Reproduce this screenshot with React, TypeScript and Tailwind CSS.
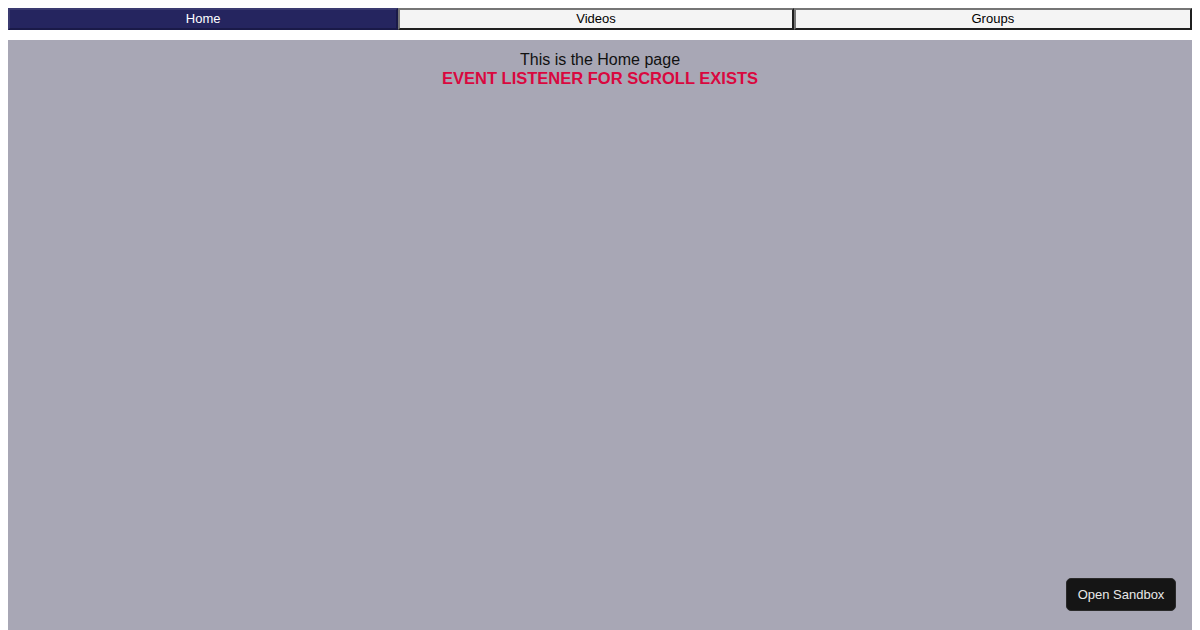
import { useState } from "react";

const tabs = ["Home", "Videos", "Groups"];

export default function App() {
  const [active, setActive] = useState("Home");

  return (
    <div className="min-h-screen bg-white p-2 pb-0 font-['Liberation_Sans',Arial,sans-serif]">
      <nav className="flex">
        {tabs.map((t) => {
          const on = t === active;
          return (
            <button
              key={t}
              onClick={() => setActive(t)}
              className={
                on
                  ? "grow h-[22px] pb-[2px] border-2 border-t-[#3a3a70] border-l-[#3a3a70] border-b-[#1a1a48] border-r-[#1a1a48] bg-[#25255f] text-[13px] leading-none text-white"
                  : "grow h-[22px] pb-[2px] border-2 border-t-[#767676] border-l-[#767676] border-b-[#1f1f1f] border-r-[#1f1f1f] bg-[#f4f4f4] text-[13px] leading-none text-black"
              }
            >
              {t}
            </button>
          );
        })}
      </nav>

      <main className="mt-[10px] h-[590px] bg-[#a8a7b5] pt-[10px] text-center">
        <p className="text-base leading-[19px] text-[#111]">This is the {active} page</p>
        <h2 className="text-[16.5px] font-bold leading-[19px] text-[#d9083f]">
          EVENT LISTENER FOR SCROLL EXISTS
        </h2>
      </main>

      <button className="fixed bottom-[19px] right-[24px] h-[33px] w-[110px] rounded-[5px] border border-[#2a2a2a] bg-[#151515] text-[13px] text-[#e8e8e8]">
        Open Sandbox
      </button>
    </div>
  );
}
